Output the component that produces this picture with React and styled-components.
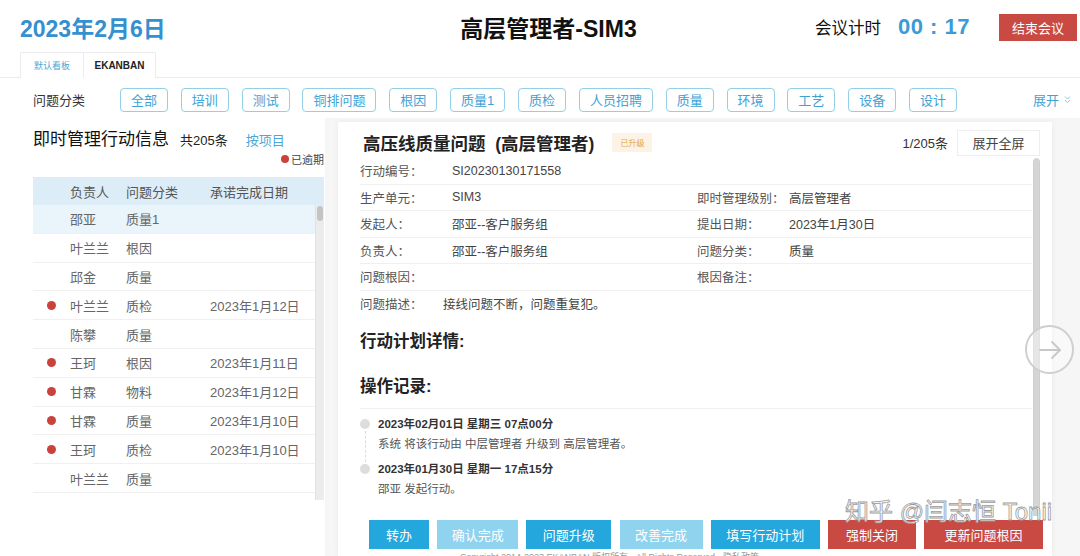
import React from 'react'
import styled, {createGlobalStyle} from 'styled-components'

const GlobalStyle = createGlobalStyle`
  html, body {
    margin: 0;
    padding: 0;
    background: #fff;
  }
  body {
    width: 1080px;
    height: 556px;
    overflow: hidden;
    font-family: "Liberation Sans", "Noto Sans CJK SC", sans-serif;
    color: #333;
  }
`

const Page = styled.div`
  position: relative;
  width: 1080px;
  height: 556px;
  display: flex;
  flex-direction: column;
`

const Header = styled.header`
  display: grid;
  grid-template-columns: 1fr auto 1fr;
  align-items: center;
  height: 52px;
  padding: 2px 3px 0 20px;
  box-sizing: border-box;
  flex-shrink: 0;
`
const DateText = styled.div`
  font-size: 23px;
  font-weight: 700;
  color: #3590d0;
`
const Title = styled.div`
  font-size: 23px;
  font-weight: 700;
  color: #111;
`
const Timer = styled.div`
  display: flex;
  align-items: center;
  justify-self: end;
`
const TimerLabel = styled.span`
  font-size: 16.5px;
  color: #111;
  margin-right: 17px;
`
const TimerValue = styled.span`
  font-size: 22px;
  font-weight: 700;
  color: #3a9bd9;
  margin-right: 29px;
  letter-spacing: 0.5px;
`
const EndButton = styled.button`
  width: 78px;
  height: 27px;
  border: none;
  background: #c94a43;
  color: #fff;
  font-size: 13px;
  font-family: inherit;
  padding: 0;
`

const Tabs = styled.div`
  display: flex;
  padding-left: 20px;
  border-bottom: 1px solid #ececec;
  height: 25px;
  flex-shrink: 0;
`
const Tab = styled.div`
  width: ${p => p.w}px;
  display: flex;
  align-items: center;
  justify-content: center;
  font-size: ${p => p.active ? 9 : 10}px;
  font-weight: ${p => p.active ? 400 : 700};
  color: ${p => p.active ? '#4aa8d8' : '#222'};
  border: 1px solid #ececec;
  border-bottom: none;
  border-left: ${p => p.active ? '1px solid #ececec' : 'none'};
  background: #fff;
  margin-bottom: -1px;
`

const FilterRow = styled.div`
  display: flex;
  align-items: center;
  height: 25px;
  margin-top: 9px;
  padding: 0 8px 0 33px;
  flex-shrink: 0;
`
const FilterLabel = styled.span`
  font-size: 13px;
  color: #333;
  width: 87px;
`
const Pills = styled.div`
  display: flex;
  gap: 12.8px;
  flex: 1;
`
const Pill = styled.span`
  height: 24px;
  box-sizing: border-box;
  padding: 0 10px;
  border: 1px solid #93cfe6;
  border-radius: 4px;
  display: flex;
  align-items: center;
  justify-content: center;
  font-size: 13px;
  color: #3fa3d4;
`
const Expand = styled.span`
  display: flex;
  align-items: center;
  gap: 4px;
  font-size: 13px;
  color: #3fa3d4;
`

const Main = styled.div`
  flex: 1;
  display: flex;
  margin-top: 6px;
  min-height: 0;
`

const LeftCol = styled.section`
  width: 325px;
  padding-left: 33px;
  box-sizing: border-box;
  display: flex;
  flex-direction: column;
`
const LeftTitleRow = styled.div`
  display: flex;
  align-items: baseline;
  margin-top: 7px;
  height: 22px;
`
const LeftTitle = styled.span`
  font-size: 17px;
  color: #111;
  margin-right: 11px;
`
const Count = styled.span`
  font-size: 13px;
  color: #222;
  margin-right: 18px;
`
const LinkText = styled.span`
  font-size: 13px;
  color: #4aa8d8;
`
const Legend = styled.div`
  display: flex;
  align-items: center;
  justify-content: flex-end;
  gap: 2px;
  font-size: 11px;
  color: #444;
  margin-top: 4px;
  padding-right: 1px;
`
const Dot = styled.span`
  width: ${p => p.size || 9}px;
  height: ${p => p.size || 9}px;
  border-radius: 50%;
  background: #c9433c;
  display: inline-block;
`

const Table = styled.div`
  margin-top: 10px;
  display: flex;
  flex-direction: column;
  width: 291px;
  height: 323px;
  overflow: hidden;
`
const TableHead = styled.div`
  display: grid;
  grid-template-columns: 37px 56px 84px 1fr;
  align-items: center;
  height: 28px;
  flex-shrink: 0;
  background: #dcedf8;
  font-size: 13px;
  color: #555;
  padding-right: 9px;
`
const TableBody = styled.div`
  display: flex;
  flex: 1;
  min-height: 0;
`
const Rows = styled.div`
  flex: 1;
`
const Row = styled.div`
  display: grid;
  grid-template-columns: 37px 56px 84px 1fr;
  align-items: center;
  height: 28.8px;
  box-sizing: border-box;
  border-bottom: 1px solid #f0f0f0;
  background: ${p => p.selected ? '#e9f4fb' : '#fff'};
  font-size: 13px;
  color: #666;
`
const DotCell = styled.span`
  display: flex;
  justify-content: center;
`
const Scrollbar = styled.div`
  width: 9px;
  background: #ececec;
  border-left: 1px solid #e2e2e2;
  box-sizing: border-box;
`
const Thumb = styled.div`
  margin: 1px;
  height: ${p => p.h}px;
  border-radius: 4px;
  background: #c4c4c4;
`

const RightCol = styled.section`
  flex: 1;
  background: #f6f6f6;
  padding: 4px 28px 0 13px;
  display: flex;
  min-width: 0;
`
const Card = styled.div`
  flex: 1;
  min-width: 0;
  overflow: hidden;
  background: #fff;
  box-shadow: 0 0 6px rgba(0,0,0,0.06);
  padding: 7px 12px 0 22px;
  display: flex;
  flex-direction: column;
`
const CardHead = styled.div`
  display: flex;
  align-items: center;
  height: 27px;
  flex-shrink: 0;
`
const CardTitle = styled.h2`
  margin: 0 0 0 3px;
  font-size: 17.5px;
  font-weight: 700;
  color: #222;
  white-space: pre;
`
const Badge = styled.span`
  margin-left: 18px;
  font-size: 8px;
  color: #e8a24a;
  background: #fdf3e4;
  padding: 4px 8px;
  border-radius: 2px;
`
const Pager = styled.span`
  margin-left: auto;
  font-size: 13px;
  color: #333;
  margin-right: 9px;
`
const FullButton = styled.button`
  width: 83px;
  height: 26px;
  border: 1px solid #eee;
  background: #fff;
  font-family: inherit;
  font-size: 13px;
  color: #444;
  padding: 0;
`
const Body = styled.div`
  flex: 1;
  display: flex;
  margin-top: 2px;
  min-height: 0;
`
const Content = styled.div`
  flex: 1;
  display: flex;
  flex-direction: column;
  min-width: 0;
  & > * {
    flex-shrink: 0;
  }
`
const InfoRow = styled.div`
  display: grid;
  grid-template-columns: ${p => p.desc ? '83px 1fr' : '92px 245px 92px 1fr'};
  align-items: center;
  height: 26.5px;
  box-sizing: border-box;
  border-bottom: ${p => p.last ? 'none' : '1px solid #f0f0f0'};
  font-size: 12.5px;
  color: #555;
`
const Label = styled.span`
  color: #555;
`
const Value = styled.span`
  color: #444;
`
const Section = styled.h3`
  margin: ${p => p.mt}px 0 0 0;
  font-size: 16.5px;
  font-weight: 600;
  color: #222;
  height: 24px;
  line-height: 24px;
`
const Divider = styled.div`
  height: 1px;
  background: #f0f0f0;
  margin-top: 10px;
`
const Timeline = styled.div`
  padding-top: 7px;
`
const Entry = styled.div`
  display: grid;
  grid-template-columns: 18px 1fr;
  position: relative;
`
const Node = styled.span`
  width: 10px;
  height: 10px;
  border-radius: 50%;
  background: #ddd;
  margin-top: 3px;
`
const Rail = styled.span`
  position: absolute;
  left: 4.5px;
  top: 15px;
  bottom: -6px;
  border-left: 1px dashed #ddd;
`
const EntryTime = styled.div`
  font-size: 11.5px;
  font-weight: 700;
  color: #333;
  height: 16px;
  line-height: 16px;
`
const EntryText = styled.div`
  font-size: 11.5px;
  color: #555;
  height: 16px;
  line-height: 16px;
  margin-top: 4px;
  margin-bottom: ${p => p.mb || 0}px;
`
const CardScroll = styled.div`
  width: 7px;
  margin: 0 0 40px 1px;
  background: #d5d5d5;
  border-radius: 4px 4px 0 0;
  border: 1px solid #cfcfcf;
  box-sizing: border-box;
  flex-shrink: 0;
`
const Actions = styled.div`
  display: flex;
  gap: 8.2px;
  margin-top: 23px;
  padding-left: 9px;
  position: relative;
  z-index: 1;
`
const Action = styled.button`
  height: 29px;
  width: ${p => p.w}px;
  flex-shrink: 0;
  border: none;
  padding: 0;
  color: #fff;
  font-family: inherit;
  font-size: 13px;
  background: ${p => p.kind === 'red' ? '#c94a43' : p.kind === 'light' ? '#8fd3ef' : '#24a7dd'};
`
const Footer = styled.div`
  font-size: 9px;
  line-height: 12px;
  color: #999;
  padding-left: 100px;
  margin-top: 2px;
  white-space: nowrap;
  overflow: hidden;
`

const NextButton = styled.div`
  position: absolute;
  left: 1025px;
  top: 325px;
  width: 49px;
  height: 49px;
  border: 2px solid #cfcfcf;
  border-radius: 50%;
  box-sizing: border-box;
  display: flex;
  align-items: center;
  justify-content: center;
  background: rgba(255,255,255,0.4);
`
const Watermark = styled.div`
  position: absolute;
  left: 845px;
  top: 497px;
  z-index: 2;
  font-size: 24px;
  line-height: 30px;
  color: rgba(255,255,255,0.9);
  -webkit-text-stroke: 0.8px #9a9a9a;
  white-space: nowrap;
  pointer-events: none;
`

const categories = ['全部', '培训', '测试', '铜排问题', '根因', '质量1', '质检', '人员招聘', '质量', '环境', '工艺', '设备', '设计']

const rows = [
  {name: '邵亚', cat: '质量1', date: '', late: false},
  {name: '叶兰兰', cat: '根因', date: '', late: false},
  {name: '邱金', cat: '质量', date: '', late: false},
  {name: '叶兰兰', cat: '质检', date: '2023年1月12日', late: true},
  {name: '陈攀', cat: '质量', date: '', late: false},
  {name: '王珂', cat: '根因', date: '2023年1月11日', late: true},
  {name: '甘霖', cat: '物料', date: '2023年1月12日', late: true},
  {name: '甘霖', cat: '质量', date: '2023年1月10日', late: true},
  {name: '王珂', cat: '质检', date: '2023年1月10日', late: true},
  {name: '叶兰兰', cat: '质量', date: '', late: false},
  {name: '', cat: '', date: '', late: false}
]

const info = [
  ['行动编号：', 'SI20230130171558', '', ''],
  ['生产单元：', 'SIM3', '即时管理级别：', '高层管理者'],
  ['发起人：', '邵亚--客户服务组', '提出日期：', '2023年1月30日'],
  ['负责人：', '邵亚--客户服务组', '问题分类：', '质量'],
  ['问题根因：', '', '根因备注：', '']
]

const actions = [
  {t: '转办', w: 60}, {t: '确认完成', w: 81, kind: 'light'}, {t: '问题升级', w: 85},
  {t: '改善完成', w: 83, kind: 'light'}, {t: '填写行动计划', w: 109},
  {t: '强制关闭', w: 88, kind: 'red'}, {t: '更新问题根因', w: 119, kind: 'red'}
]

const App = () => (
  <Page>
    <GlobalStyle />
    <Header>
      <DateText>2023年2月6日</DateText>
      <Title>高层管理者-SIM3</Title>
      <Timer>
        <TimerLabel>会议计时</TimerLabel>
        <TimerValue>00 : 17</TimerValue>
        <EndButton>结束会议</EndButton>
      </Timer>
    </Header>

    <Tabs>
      <Tab w={62} active>默认看板</Tab>
      <Tab w={71}>EKANBAN</Tab>
    </Tabs>

    <FilterRow>
      <FilterLabel>问题分类</FilterLabel>
      <Pills>
        {categories.map(c => <Pill key={c}>{c}</Pill>)}
      </Pills>
      <Expand>
        展开
        <svg width="9" height="9" viewBox="0 0 9 9" fill="none" stroke="#8cc6e2" strokeWidth="1">
          <path d="M2 1.5 L4.5 4 L7 1.5" />
          <path d="M2 5 L4.5 7.5 L7 5" />
        </svg>
      </Expand>
    </FilterRow>

    <Main>
      <LeftCol>
        <LeftTitleRow>
          <LeftTitle>即时管理行动信息</LeftTitle>
          <Count>共205条</Count>
          <LinkText>按项目</LinkText>
        </LeftTitleRow>
        <Legend><Dot size={8} />已逾期</Legend>
        <Table>
          <TableHead>
            <span />
            <span>负责人</span>
            <span>问题分类</span>
            <span>承诺完成日期</span>
          </TableHead>
          <TableBody>
            <Rows>
              {rows.map((r, i) => (
                <Row key={i} selected={i === 0}>
                  <DotCell>{r.late && <Dot />}</DotCell>
                  <span>{r.name}</span>
                  <span>{r.cat}</span>
                  <span>{r.date}</span>
                </Row>
              ))}
            </Rows>
            <Scrollbar>
              <Thumb h={15} />
            </Scrollbar>
          </TableBody>
        </Table>
      </LeftCol>

      <RightCol>
        <Card>
          <CardHead>
            <CardTitle>{'高压线质量问题  (高层管理者)'}</CardTitle>
            <Badge>已升级</Badge>
            <Pager>1/205条</Pager>
            <FullButton>展开全屏</FullButton>
          </CardHead>
          <Body>
            <Content>
              {info.map((r, i) => (
                <InfoRow key={i}>
                  <Label>{r[0]}</Label>
                  <Value>{r[1]}</Value>
                  <Label>{r[2]}</Label>
                  <Value>{r[3]}</Value>
                </InfoRow>
              ))}
              <InfoRow desc last>
                <Label>问题描述：</Label>
                <Value>接线问题不断，问题重复犯。</Value>
              </InfoRow>
              <Section mt={12}>行动计划详情:</Section>
              <Section mt={21}>操作记录:</Section>
              <Divider />
              <Timeline>
                <Entry>
                  <Node />
                  <Rail />
                  <div>
                    <EntryTime>2023年02月01日 星期三 07点00分</EntryTime>
                    <EntryText mb={9}>系统 将该行动由 中层管理者 升级到 高层管理者。</EntryText>
                  </div>
                </Entry>
                <Entry>
                  <Node />
                  <div>
                    <EntryTime>2023年01月30日 星期一 17点15分</EntryTime>
                    <EntryText>邵亚 发起行动。</EntryText>
                  </div>
                </Entry>
              </Timeline>
              <Actions>
                {actions.map(a => <Action key={a.t} w={a.w} kind={a.kind}>{a.t}</Action>)}
              </Actions>
              <Footer>Copyright 2014-2023 EKANBAN 版权所有 · All Rights Reserved · 隐私政策</Footer>
            </Content>
            <CardScroll />
          </Body>
        </Card>
      </RightCol>
    </Main>

    <NextButton>
      <svg width="30" height="30" viewBox="0 0 30 30" fill="none" stroke="#c8c8c8" strokeWidth="1.8" strokeLinecap="round" strokeLinejoin="round">
        <path d="M5 15 H25" />
        <path d="M17 7 L25 15 L17 23" />
      </svg>
    </NextButton>
    <Watermark>知乎 @闫志恒 Tonii</Watermark>
  </Page>
)

export default App
